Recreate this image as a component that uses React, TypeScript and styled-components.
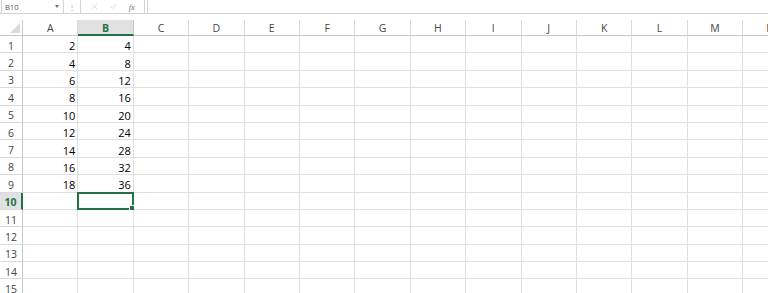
import React from "react";
import styled, { createGlobalStyle } from "styled-components";
import { X, Check } from "lucide-react";

const GlobalStyle = createGlobalStyle`
  html, body { margin: 0; padding: 0; background: #fff; overflow: hidden; }
  body { font-family: "Open Sans", "Noto Sans", sans-serif; }
  * { box-sizing: border-box; }
`;

const GREEN = "#217346";
const COL_W = 55.4;
const ROW_H = 17.4;
const COLS = ["A", "B", "C", "D", "E", "F", "G", "H", "I", "J", "K", "L", "M", "N"];
const ROWS = 15;

const Page = styled.div`
  width: 768px;
  height: 293px;
  overflow: hidden;
  display: flex;
  flex-direction: column;
  & > * { flex-shrink: 0; }
`;

const TopBar = styled.div`
  height: 14px;
  display: flex;
  align-items: stretch;
  border-bottom: 1px solid #d4d4d4;
`;

const NameBox = styled.div`
  margin-left: 1px;
  width: 63px;
  border-left: 1px solid #d4d4d4;
  border-right: 1px solid #d4d4d4;
  display: flex;
  align-items: center;
  justify-content: space-between;
  padding: 0 4px 0 3px;
  font-size: 7.5px;
  color: #555;
`;

const Caret = styled.span`
  width: 0;
  height: 0;
  border-left: 2.5px solid transparent;
  border-right: 2.5px solid transparent;
  border-top: 3px solid #777;
`;

const Dots = styled.div`
  width: 16px;
  display: flex;
  align-items: center;
  justify-content: center;
  font-size: 8px;
  color: #aaa;
`;

const FxGroup = styled.div`
  width: 65px;
  border-left: 1px solid #d4d4d4;
  border-right: 1px solid #d4d4d4;
  display: flex;
  align-items: center;
  justify-content: space-around;
  padding: 0 4px;
  color: #b5b5b5;
`;

const FxText = styled.span`
  font-family: "Liberation Serif", serif;
  font-style: italic;
  font-size: 8.5px;
  color: #777;
`;

const FormulaInput = styled.div`
  flex: 1;
  margin-left: 2px;
  border-left: 1px solid #d4d4d4;
`;

const Spacer = styled.div`
  height: 6px;
`;

const Grid = styled.div`
  display: grid;
  grid-template-columns: 23px repeat(${COLS.length}, ${COL_W}px);
  grid-template-rows: 16px repeat(${ROWS}, ${ROW_H}px);
`;

const Corner = styled.div`
  border-right: 1px solid #c8c8c8;
  border-bottom: 1px solid #c8c8c8;
  display: flex;
  align-items: flex-end;
  justify-content: flex-end;
  padding: 0 2px 2px 0;
`;

const Triangle = styled.div`
  width: 10px;
  height: 10px;
  background: #dadada;
  clip-path: polygon(100% 0, 100% 100%, 0 100%);
`;

const ColHeader = styled.div<{ $active?: boolean }>`
  display: flex;
  align-items: center;
  justify-content: center;
  padding-top: 1px;
  font-size: 10.5px;
  color: ${(p) => (p.$active ? GREEN : "#444")};
  font-weight: ${(p) => (p.$active ? 700 : 400)};
  background: ${(p) => (p.$active ? "#e1e1e1" : "#fff")};
  border-right: 1px solid ${(p) => (p.$active ? "#c8c8c8" : "#dadada")};
  border-bottom: ${(p) => (p.$active ? `2px solid ${GREEN}` : "1px solid #c8c8c8")};
`;

const RowHeader = styled.div<{ $active?: boolean }>`
  display: flex;
  align-items: center;
  justify-content: center;
  padding-top: 3px;
  font-size: 10.5px;
  color: ${(p) => (p.$active ? GREEN : "#444")};
  font-weight: ${(p) => (p.$active ? 700 : 400)};
  background: ${(p) => (p.$active ? "#e1e1e1" : "#fff")};
  border-right: ${(p) => (p.$active ? `2px solid ${GREEN}` : "1px solid #c8c8c8")};
  border-bottom: 1px solid #dadada;
`;

const Cell = styled.div`
  position: relative;
  display: flex;
  align-items: center;
  justify-content: flex-end;
  padding: 3px 2px 0 0;
  font-size: 11px;
  color: #000;
  border-right: 1px solid #e0e0e0;
  border-bottom: 1px solid #e0e0e0;
`;

const Selection = styled.div`
  position: absolute;
  left: -1px;
  top: -1px;
  right: -1px;
  bottom: -1px;
  border: 2px solid ${GREEN};
  pointer-events: none;
`;

const Handle = styled.div`
  position: absolute;
  right: -3px;
  bottom: -3px;
  width: 4px;
  height: 4px;
  background: ${GREEN};
  border: 1px solid #fff;
  box-sizing: content-box;
`;

const values: Record<string, number> = {};
for (let r = 1; r <= 9; r++) {
  values[`A${r}`] = r * 2;
  values[`B${r}`] = r * 4;
}

export default function App() {
  const cells: React.ReactNode[] = [];
  cells.push(
    <Corner key="corner">
      <Triangle />
    </Corner>
  );
  COLS.forEach((c) => cells.push(<ColHeader key={`h${c}`} $active={c === "B"}>{c}</ColHeader>));
  for (let r = 1; r <= ROWS; r++) {
    cells.push(
      <RowHeader key={`r${r}`} $active={r === 10}>
        {r}
      </RowHeader>
    );
    COLS.forEach((c) => {
      const id = `${c}${r}`;
      const sel = id === "B10";
      cells.push(
        <Cell key={id}>
          {values[id] ?? ""}
          {sel && (
            <Selection>
              <Handle />
            </Selection>
          )}
        </Cell>
      );
    });
  }

  return (
    <Page>
      <GlobalStyle />
      <TopBar>
        <NameBox>
          <span>B10</span>
          <Caret />
        </NameBox>
        <Dots>⋮</Dots>
        <FxGroup>
          <X size={9} strokeWidth={1.3} />
          <Check size={9} strokeWidth={1.3} />
          <FxText>fx</FxText>
        </FxGroup>
        <FormulaInput />
      </TopBar>
      <Spacer />
      <Grid>{cells}</Grid>
    </Page>
  );
}
